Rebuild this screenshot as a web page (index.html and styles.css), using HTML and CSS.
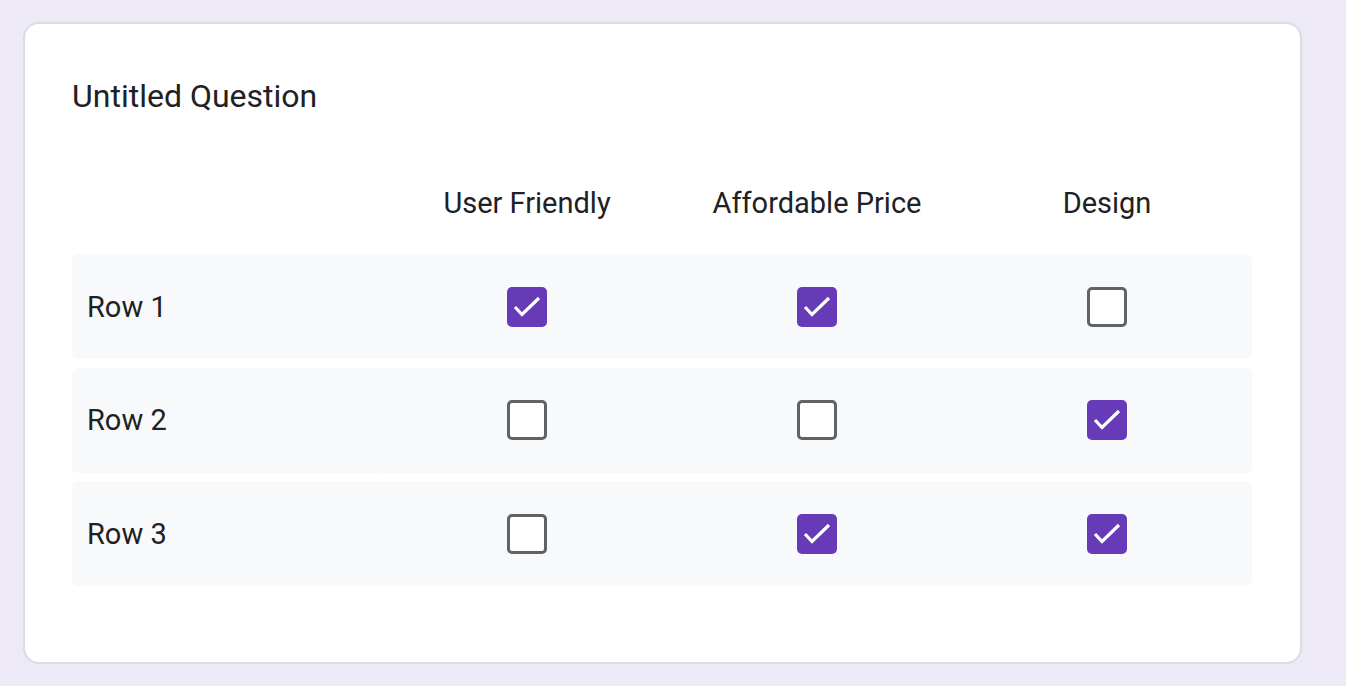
FILE: index.html
```html
<!DOCTYPE html>
<html lang="en">

<head>
    <meta charset="UTF-8">
    <meta name="viewport" content="width=device-width, initial-scale=1.0">
    <title>Untitled Question</title>
    <link rel="stylesheet" href="styles.css">
</head>

<body>
    <div class="card">
        <div class="question-title">Untitled Question</div>

        <div class="grid">
            <div class="grid-head">
                <div class="cell label"></div>
                <div class="cell">User Friendly</div>
                <div class="cell">Affordable Price</div>
                <div class="cell">Design</div>
            </div>

            <div class="grid-row">
                <div class="cell label">Row 1</div>
                <div class="cell"><span class="box checked"><svg viewBox="0 0 40 40"><polyline points="8,20 15,27.5 32,11"/></svg></span></div>
                <div class="cell"><span class="box checked"><svg viewBox="0 0 40 40"><polyline points="8,20 15,27.5 32,11"/></svg></span></div>
                <div class="cell"><span class="box"></span></div>
            </div>

            <div class="grid-row">
                <div class="cell label">Row 2</div>
                <div class="cell"><span class="box"></span></div>
                <div class="cell"><span class="box"></span></div>
                <div class="cell"><span class="box checked"><svg viewBox="0 0 40 40"><polyline points="8,20 15,27.5 32,11"/></svg></span></div>
            </div>

            <div class="grid-row">
                <div class="cell label">Row 3</div>
                <div class="cell"><span class="box"></span></div>
                <div class="cell"><span class="box checked"><svg viewBox="0 0 40 40"><polyline points="8,20 15,27.5 32,11"/></svg></span></div>
                <div class="cell"><span class="box checked"><svg viewBox="0 0 40 40"><polyline points="8,20 15,27.5 32,11"/></svg></span></div>
            </div>
        </div>
    </div>
</body>

</html>
```

FILE: styles.css
```css
body {
    margin: 0;
    padding: 22px 0 0 23px;
    background-color: #ede9f7;
    font-family: Roboto, "Noto Sans", sans-serif;
    color: #202124;
}

.card {
    box-sizing: border-box;
    width: 1279px;
    height: 642px;
    padding: 54px 47px 0 47px;
    background-color: white;
    border: 2px solid #dadce0;
    border-radius: 16px;
}

.question-title {
    font-size: 32px;
    line-height: 36px;
    margin-bottom: 73px;
}

.grid {
    width: 1180px;
}

.grid-head,
.grid-row {
    display: grid;
    grid-template-columns: 310px repeat(3, 290px);
}

.grid-head {
    height: 67px;
    font-size: 29px;
    line-height: 32px;
}

.grid-head .cell {
    display: flex;
    justify-content: center;
    align-items: flex-start;
}

.grid-row {
    height: 105px;
    margin-bottom: 8.5px;
    font-size: 29px;
}

.grid-row .cell {
    display: flex;
    justify-content: center;
    align-items: center;
    background-color: #f8f9fa;
}

.grid-row .cell.label {
    justify-content: flex-start;
    padding-left: 15px;
    border-radius: 6px 2px 2px 6px;
}

.grid-row .cell:nth-child(2) {
    border-radius: 2px 0 0 2px;
}

.grid-row .cell:last-child {
    border-radius: 0 6px 6px 0;
}

.box {
    box-sizing: border-box;
    display: block;
    width: 40px;
    height: 40px;
    border: 3px solid #5f6368;
    border-radius: 5px;
    background-color: white;
}

.box.checked {
    border: none;
    background-color: #673ab7;
}

.box svg {
    display: block;
    width: 40px;
    height: 40px;
}

.box polyline {
    fill: none;
    stroke: white;
    stroke-width: 3.2;
}
```
